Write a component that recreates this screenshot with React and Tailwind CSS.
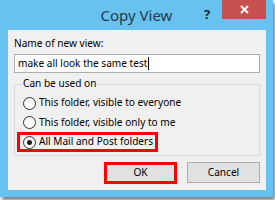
import { useState } from 'react'

const options = [
  'This folder, visible to everyone',
  'This folder, visible only to me',
  'All Mail and Post folders',
]

const Radio = ({ checked }) => (
  <span className="flex h-[13px] w-[13px] shrink-0 items-center justify-center rounded-full border border-[#333] bg-gradient-to-b from-[#f4f4f4] to-white">
    {checked && <span className="h-[5px] w-[5px] rounded-full bg-[#1a1a1a]" />}
  </span>
)

export default function App() {
  const [selected, setSelected] = useState(2)
  const name = 'make all look the same test'

  return (
    <div className="h-[200px] w-[275px] overflow-hidden bg-white font-['Noto_Sans',sans-serif] text-[10.1px] text-black">
      <div className="flex h-[197px] w-[273px] flex-col bg-[#67c2ef] shadow-[2px_3px_3px_rgba(0,0,0,0.5)]">
        {/* Title bar */}
        <div className="relative flex h-[30px] shrink-0 items-center justify-center">
          <span className="text-[15px] leading-none text-[#253a4e]">Copy View</span>
          <span className="absolute left-[204px] top-[5px] text-[13px] font-bold text-[#1e2a36]">?</span>
          <button className="absolute right-[7px] top-0 flex h-[19px] w-[44px] items-center justify-center bg-[#c75050] text-white">
            <svg width="9" height="9" viewBox="0 0 9 9">
              <path d="M1 1 L8 8 M8 1 L1 8" stroke="white" strokeWidth="2" />
            </svg>
          </button>
        </div>

        {/* Client area */}
        <div className="ml-[8px] mr-[7px] flex h-[160px] flex-col bg-[#f0f0f0] px-[6px] pt-[6px]">
          <label className="leading-[15px]">Name of new view:</label>
          <div className="mt-[3px] flex h-[19px] items-center border border-[#adadad] bg-white px-[3px] leading-[15px]">
            <span className="whitespace-nowrap">{name}</span>
            <span className="ml-[1px] h-[13px] w-[1px] bg-black" />
          </div>

          <div className="relative mt-[11px] flex h-[72px] flex-col border border-[#dcdcdc] pt-[8px]">
            <span className="absolute -top-[9px] left-[7px] bg-[#f0f0f0] px-[1px] leading-[15px]">
              Can be used on
            </span>
            {options.map((o, i) =>
              i === 2 ? (
                <div
                  key={o}
                  onClick={() => setSelected(i)}
                  className="ml-[2px] flex h-[20px] w-[141px] items-center gap-[3px] border-[3px] border-[#ff0000] pl-[3px]"
                >
                  <Radio checked={selected === i} />
                  <span className="whitespace-nowrap">{o}</span>
                </div>
              ) : (
                <div
                  key={o}
                  onClick={() => setSelected(i)}
                  className={`flex items-center gap-[3px] pl-[8px] ${i === 0 ? 'h-[20px]' : 'h-[19px]'}`}
                >
                  <Radio checked={selected === i} />
                  <span className="whitespace-nowrap">{o}</span>
                </div>
              )
            )}
          </div>

          <div className="mt-[6px] flex justify-end gap-[10px]">
            <button className="h-[22px] w-[73px] border-[3px] border-[#ff0000] bg-[#e1e1e1]">OK</button>
            <button className="h-[21px] w-[73px] border border-[#adadad] bg-[#e1e1e1]">Cancel</button>
          </div>
        </div>
      </div>
    </div>
  )
}
